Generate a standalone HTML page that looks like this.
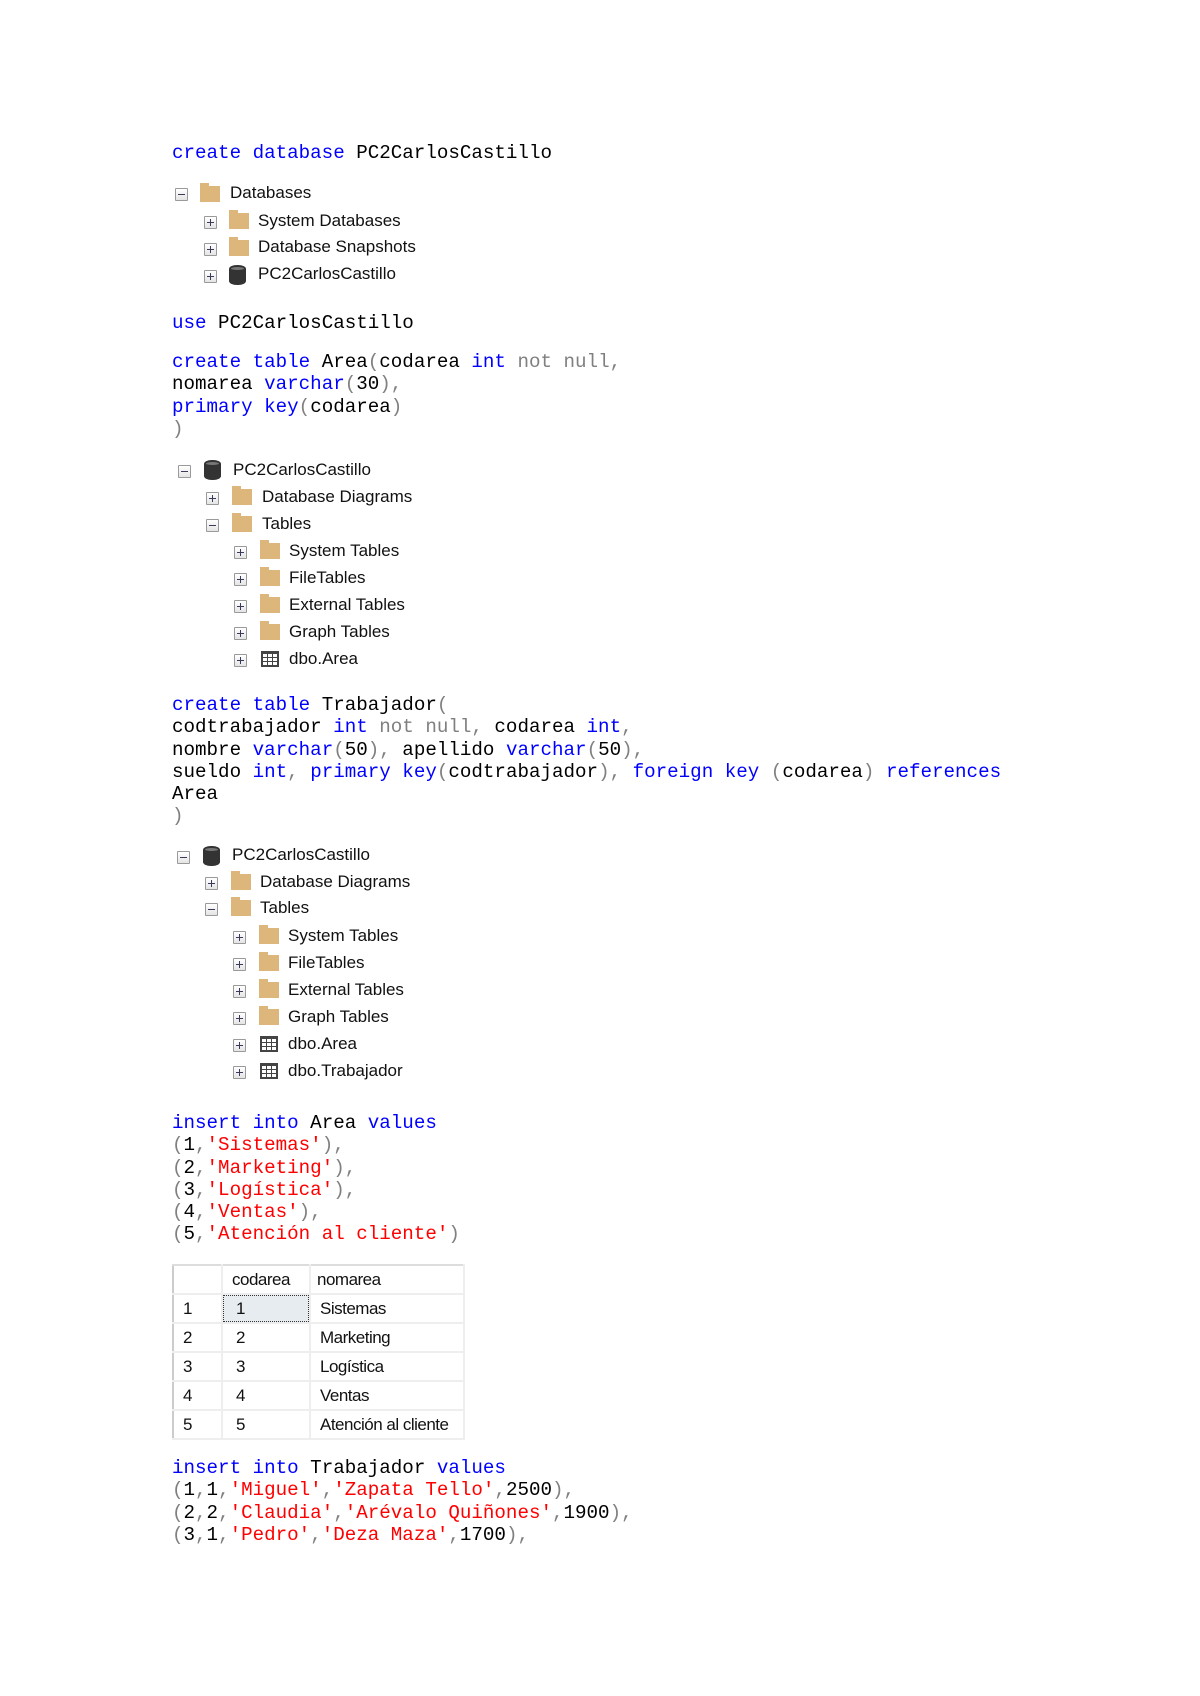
<!DOCTYPE html>
<html><head><meta charset="utf-8"><style>
body{margin:0;width:1200px;height:1696px;background:#fff;position:relative;overflow:hidden}
pre{position:absolute;left:172px;margin:0;font-family:"Liberation Mono",monospace;font-size:19.2px;line-height:22.3px;color:#000}
.k{color:#0000ff}.g{color:#808080}.r{color:#ff0000}
.t{position:absolute;font-family:"Liberation Sans","DejaVu Sans",sans-serif;font-size:17px;color:#111;line-height:20px;white-space:nowrap}
.b{position:absolute;width:11px;height:11px;border:1px solid #9a9a9a;background:linear-gradient(#fff,#e4e4e4);border-radius:1px}
.b::before{content:"";position:absolute;left:2px;top:5px;width:7px;height:1px;background:#3a3a5a}
.p::after{content:"";position:absolute;left:5px;top:2px;width:1px;height:7px;background:#3a3a5a}
.f{position:absolute;width:20px;height:16px;background:#dcb67a}
.f::before{content:"";position:absolute;left:0;top:-3px;width:9px;height:3px;background:#dcb67a}
.d{position:absolute;width:17px;height:20px;background:#333;border-radius:8px/4px}
.d::before{content:"";position:absolute;left:2px;top:2px;width:13px;height:3px;border-radius:50%;background:#777}
.tb{position:absolute;width:18px;height:16px;background:
linear-gradient(90deg,transparent 4px,#444 4px,#444 5px,transparent 5px,transparent 9px,#444 9px,#444 10px,transparent 10px),
linear-gradient(transparent 3px,#444 3px,#444 4px,transparent 4px,transparent 7px,#444 7px,#444 8px,transparent 8px);
border:2px solid #444;border-top-width:3px;box-sizing:border-box}
table{position:absolute;left:172px;top:1264px;border-collapse:collapse;font-family:"Liberation Sans",sans-serif;font-size:17px;color:#111;border-left:2px solid #ccc;border-top:2px solid #ddd}
td{height:27px;padding:0 0 0 9px;border-right:2px solid #eee;border-bottom:2px solid #eee;letter-spacing:-0.5px}
</style></head><body>

<pre style="top:142px"><span class="k">create database</span> PC2CarlosCastillo</pre>

<div class="b" style="left:175px;top:188px"></div><div class="f" style="left:200px;top:186px"></div><div class="t" style="left:230px;top:183px">Databases</div>
<div class="b p" style="left:204px;top:216px"></div><div class="f" style="left:229px;top:213px"></div><div class="t" style="left:258px;top:211px">System Databases</div>
<div class="b p" style="left:204px;top:243px"></div><div class="f" style="left:229px;top:240px"></div><div class="t" style="left:258px;top:237px">Database Snapshots</div>
<div class="b p" style="left:204px;top:270px"></div><div class="d" style="left:229px;top:265px"></div><div class="t" style="left:258px;top:264px">PC2CarlosCastillo</div>

<pre style="top:312px"><span class="k">use</span> PC2CarlosCastillo</pre>

<pre style="top:351px"><span class="k">create table</span> Area<span class="g">(</span>codarea <span class="k">int</span> <span class="g">not null,</span>
nomarea <span class="k">varchar</span><span class="g">(</span>30<span class="g">),</span>
<span class="k">primary key</span><span class="g">(</span>codarea<span class="g">)</span>
<span class="g">)</span></pre>

<div class="b" style="left:178px;top:465px"></div><div class="d" style="left:204px;top:460px"></div><div class="t" style="left:233px;top:460px">PC2CarlosCastillo</div>
<div class="b p" style="left:206px;top:492px"></div><div class="f" style="left:232px;top:489px"></div><div class="t" style="left:262px;top:487px">Database Diagrams</div>
<div class="b" style="left:206px;top:519px"></div><div class="f" style="left:232px;top:516px"></div><div class="t" style="left:262px;top:514px">Tables</div>
<div class="b p" style="left:234px;top:546px"></div><div class="f" style="left:260px;top:543px"></div><div class="t" style="left:289px;top:541px">System Tables</div>
<div class="b p" style="left:234px;top:573px"></div><div class="f" style="left:260px;top:570px"></div><div class="t" style="left:289px;top:568px">FileTables</div>
<div class="b p" style="left:234px;top:600px"></div><div class="f" style="left:260px;top:597px"></div><div class="t" style="left:289px;top:595px">External Tables</div>
<div class="b p" style="left:234px;top:627px"></div><div class="f" style="left:260px;top:624px"></div><div class="t" style="left:289px;top:622px">Graph Tables</div>
<div class="b p" style="left:234px;top:654px"></div><div class="tb" style="left:261px;top:651px"></div><div class="t" style="left:289px;top:649px">dbo.Area</div>

<pre style="top:694px"><span class="k">create table</span> Trabajador<span class="g">(</span>
codtrabajador <span class="k">int</span> <span class="g">not null,</span> codarea <span class="k">int</span><span class="g">,</span>
nombre <span class="k">varchar</span><span class="g">(</span>50<span class="g">),</span> apellido <span class="k">varchar</span><span class="g">(</span>50<span class="g">),</span>
sueldo <span class="k">int</span><span class="g">,</span> <span class="k">primary key</span><span class="g">(</span>codtrabajador<span class="g">),</span> <span class="k">foreign key</span> <span class="g">(</span>codarea<span class="g">)</span> <span class="k">references</span>
Area
<span class="g">)</span></pre>

<div class="b" style="left:177px;top:851px"></div><div class="d" style="left:203px;top:846px"></div><div class="t" style="left:232px;top:845px">PC2CarlosCastillo</div>
<div class="b p" style="left:205px;top:877px"></div><div class="f" style="left:231px;top:874px"></div><div class="t" style="left:260px;top:872px">Database Diagrams</div>
<div class="b" style="left:205px;top:903px"></div><div class="f" style="left:231px;top:900px"></div><div class="t" style="left:260px;top:898px">Tables</div>
<div class="b p" style="left:233px;top:931px"></div><div class="f" style="left:259px;top:928px"></div><div class="t" style="left:288px;top:926px">System Tables</div>
<div class="b p" style="left:233px;top:958px"></div><div class="f" style="left:259px;top:955px"></div><div class="t" style="left:288px;top:953px">FileTables</div>
<div class="b p" style="left:233px;top:985px"></div><div class="f" style="left:259px;top:982px"></div><div class="t" style="left:288px;top:980px">External Tables</div>
<div class="b p" style="left:233px;top:1012px"></div><div class="f" style="left:259px;top:1009px"></div><div class="t" style="left:288px;top:1007px">Graph Tables</div>
<div class="b p" style="left:233px;top:1039px"></div><div class="tb" style="left:260px;top:1036px"></div><div class="t" style="left:288px;top:1034px">dbo.Area</div>
<div class="b p" style="left:233px;top:1066px"></div><div class="tb" style="left:260px;top:1063px"></div><div class="t" style="left:288px;top:1061px">dbo.Trabajador</div>

<pre style="top:1112px"><span class="k">insert into</span> Area <span class="k">values</span>
<span class="g">(</span>1<span class="g">,</span><span class="r">'Sistemas'</span><span class="g">),</span>
<span class="g">(</span>2<span class="g">,</span><span class="r">'Marketing'</span><span class="g">),</span>
<span class="g">(</span>3<span class="g">,</span><span class="r">'Logística'</span><span class="g">),</span>
<span class="g">(</span>4<span class="g">,</span><span class="r">'Ventas'</span><span class="g">),</span>
<span class="g">(</span>5<span class="g">,</span><span class="r">'Atención al cliente'</span><span class="g">)</span></pre>

<table>
<tr><td style="width:38px"></td><td style="width:77px">codarea</td><td style="width:146px;padding-left:6px">nomarea</td></tr>
<tr><td>1</td><td style="background:#e6ecf0;outline:1px dotted #333;outline-offset:-2px;padding-left:13px">1</td><td>Sistemas</td></tr>
<tr><td>2</td><td style="padding-left:13px">2</td><td>Marketing</td></tr>
<tr><td>3</td><td style="padding-left:13px">3</td><td>Logística</td></tr>
<tr><td>4</td><td style="padding-left:13px">4</td><td>Ventas</td></tr>
<tr><td>5</td><td style="padding-left:13px">5</td><td>Atención al cliente</td></tr>
</table>

<pre style="top:1457px"><span class="k">insert into</span> Trabajador <span class="k">values</span>
<span class="g">(</span>1<span class="g">,</span>1<span class="g">,</span><span class="r">'Miguel'</span><span class="g">,</span><span class="r">'Zapata Tello'</span><span class="g">,</span>2500<span class="g">),</span>
<span class="g">(</span>2<span class="g">,</span>2<span class="g">,</span><span class="r">'Claudia'</span><span class="g">,</span><span class="r">'Arévalo Quiñones'</span><span class="g">,</span>1900<span class="g">),</span>
<span class="g">(</span>3<span class="g">,</span>1<span class="g">,</span><span class="r">'Pedro'</span><span class="g">,</span><span class="r">'Deza Maza'</span><span class="g">,</span>1700<span class="g">),</span></pre>

</body></html>
